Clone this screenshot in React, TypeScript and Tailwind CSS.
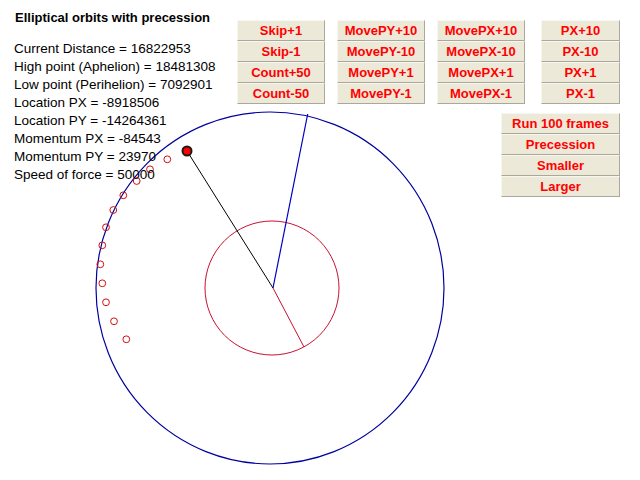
import React from 'react'

const stats = [
  'Current Distance = 16822953',
  'High point (Aphelion) = 18481308',
  'Low point (Perihelion) = 7092901',
  'Location PX = -8918506',
  'Location PY = -14264361',
  'Momentum PX = -84543',
  'Momentum PY = 23970',
  'Speed of force = 50000',
]

const columns = [
  { labels: ['Skip+1', 'Skip-1', 'Count+50', 'Count-50'], cls: 'w-[88px]' },
  { labels: ['MovePY+10', 'MovePY-10', 'MovePY+1', 'MovePY-1'], cls: 'w-[88px] ml-[12px]' },
  { labels: ['MovePX+10', 'MovePX-10', 'MovePX+1', 'MovePX-1'], cls: 'w-[88px] ml-[12px]' },
  { labels: ['PX+10', 'PX-10', 'PX+1', 'PX-1'], cls: 'w-[79px] ml-[16px]' },
]

const actions = ['Run 100 frames', 'Precession', 'Smaller', 'Larger']

// trail of previous positions
const trail = [
  [167.3, 159.3], [150, 169.3], [136.7, 181], [123.3, 195.3],
  [113.3, 210], [106, 227.3], [102.3, 245.3], [100.3, 264.3],
  [102.3, 283.3], [106, 302.3], [114, 321.3], [126.3, 339.3],
]

function Btn({ label }: { label: string }) {
  return (
    <button className="h-[21px] w-full flex items-center justify-center bg-[#ece9d8] border border-t-[#f7f6f0] border-l-[#f7f6f0] border-b-[#aca899] border-r-[#aca899] text-[13px] font-bold text-[#ff0000] leading-none">
      {label}
    </button>
  )
}

function Orbit() {
  return (
    <svg className="absolute inset-0" width="640" height="480" viewBox="0 0 640 480">
      <ellipse cx="270" cy="288" rx="174" ry="176" fill="none" stroke="#0000a0" strokeWidth="1.2" />
      <circle cx="272" cy="288" r="67" fill="none" stroke="#c8102e" strokeWidth="1" />
      <line x1="273" y1="288" x2="307.7" y2="114" stroke="#0000c0" strokeWidth="1.2" />
      <line x1="273" y1="288" x2="304" y2="347" stroke="#c8102e" strokeWidth="1" />
      <line x1="273" y1="288" x2="187" y2="151" stroke="#000000" strokeWidth="1" />
      {trail.map(([x, y], i) => (
        <circle key={i} cx={x} cy={y} r="3.4" fill="none" stroke="#d01010" strokeWidth="1" />
      ))}
      <circle cx="187" cy="151" r="4.5" fill="#ff0000" stroke="#1a1a1a" strokeWidth="2" />
    </svg>
  )
}

export default function App() {
  return (
    <div className="relative w-[640px] h-[480px] bg-white overflow-hidden font-['Liberation_Sans',Arial,sans-serif]">
      <Orbit />
      <div className="relative flex">
        <div className="w-[237px] pl-[14px] text-black">
          <h1 className="mt-[10px] pl-[1px] h-[16px] text-[13px] leading-[16px] font-bold">
            Elliptical orbits with precession
          </h1>
          <div className="mt-[14px] text-[13.5px] leading-[18px]">
            {stats.map(s => (
              <div key={s} className="whitespace-nowrap">{s}</div>
            ))}
          </div>
        </div>
        <div className="pt-[20px] flex flex-col">
          <div className="flex">
            {columns.map(col => (
              <div key={col.labels[0]} className={`flex flex-col ${col.cls}`}>
                {col.labels.map(l => <Btn key={l} label={l} />)}
              </div>
            ))}
          </div>
          <div className="mt-[9px] ml-auto w-[119px] flex flex-col">
            {actions.map(l => <Btn key={l} label={l} />)}
          </div>
        </div>
      </div>
    </div>
  )
}
